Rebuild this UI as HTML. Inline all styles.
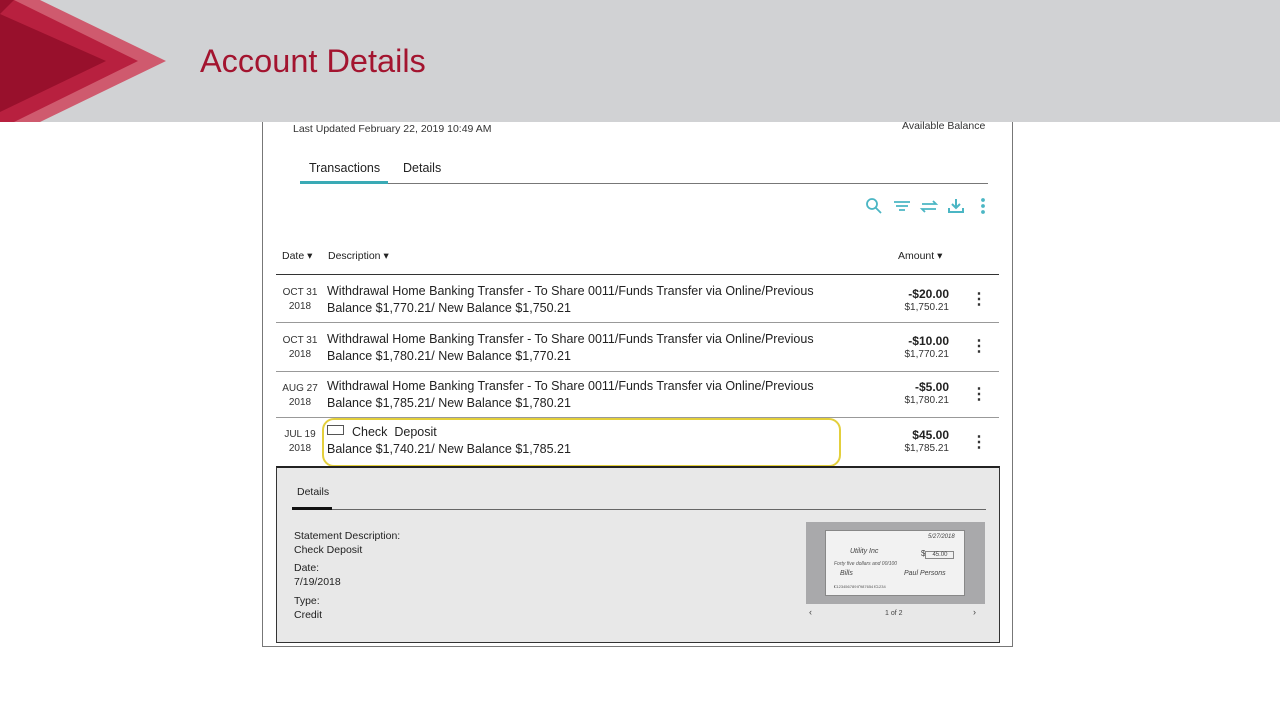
<!DOCTYPE html>
<html><head><style>
body{margin:0;width:1280px;height:720px;background:#fff;position:relative;overflow:hidden;font-family:"Liberation Sans",sans-serif;color:#222}
.a{position:absolute;white-space:nowrap}
.hdr{position:absolute;left:0;top:0;width:1280px;height:122px;background:#d1d2d4}
.row{position:absolute;left:276px;width:723px;border-top:1px solid #999}
.d{position:absolute;left:0;width:48px;text-align:center;font-size:10px;line-height:14px;color:#333}
.ds{position:absolute;left:51px;font-size:12.5px;line-height:17px;color:#222}
.am{position:absolute;right:50px;text-align:right;font-size:12px;font-weight:bold;line-height:14px}
.am small{display:block;font-weight:normal;font-size:10px;color:#333}
.k{position:absolute;right:12px;font-size:16px;font-weight:bold;color:#333}
</style></head><body>
<div class="hdr"></div>
<svg class="a" style="left:0;top:0" width="170" height="122">
<polygon points="0,0 40,0 166,61 40,122 0,122" fill="#cf5a6e"/>
<polygon points="0,0 14,0 138,61 14,122 0,122" fill="#b8203f"/>
<polygon points="0,14 106,61 0,112" fill="#98102c"/>
<polygon points="0,0 14,0 0,14" fill="#98102c"/>
</svg>
<div class="a" style="left:200px;top:43px;font-size:32.5px;color:#a3142f">Account Details</div>
<div class="a" style="left:262px;top:122px;width:749px;height:524px;border:1px solid #777;border-top:none"></div>
<div class="a" style="left:293px;top:123px;font-size:10.5px;color:#333">Last Updated February 22, 2019 10:49 AM</div>
<div class="a" style="left:902px;top:120px;font-size:10.5px;color:#333">Available Balance</div>
<div class="a" style="left:309px;top:161px;font-size:12.5px">Transactions</div>
<div class="a" style="left:403px;top:161px;font-size:12.5px">Details</div>
<div class="a" style="left:300px;top:183px;width:688px;border-top:1px solid #777"></div>
<div class="a" style="left:300px;top:181px;width:88px;height:3px;background:#3aaab5"></div>
<svg class="a" style="left:864px;top:196px" width="130" height="22" fill="none" stroke="#4bb6c4" stroke-width="1.8">
<circle cx="8" cy="8" r="5"/><path d="M12 12l5 5"/>
<path d="M30 6h16M32 10h12M35 14h6"/>
<path d="M58 8h14l-3-3M72 13h-14l3 3"/>
<path d="M92 3v9M88 8l4 4 4-4M85 12v4h14v-4" stroke-width="2"/>
<circle cx="119" cy="4" r="1" fill="#4bb6c4"/><circle cx="119" cy="10" r="1" fill="#4bb6c4"/><circle cx="119" cy="16" r="1" fill="#4bb6c4"/>
</svg>
<div class="a" style="left:282px;top:250px;font-size:10.5px">Date ▾</div>
<div class="a" style="left:328px;top:250px;font-size:10.5px">Description ▾</div>
<div class="a" style="left:898px;top:250px;font-size:10.5px">Amount ▾</div>
<div class="a" style="left:276px;top:274px;width:723px;border-top:1.5px solid #333"></div>

<div class="row" style="top:275px;height:47px;border-top:none">
<div class="d" style="top:11px">OCT 31<br>2018</div>
<div class="ds" style="top:8px">Withdrawal Home Banking Transfer - To Share 0011/Funds Transfer via Online/Previous<br>Balance $1,770.21/ New Balance $1,750.21</div>
<div class="am" style="top:12px">-$20.00<small>$1,750.21</small></div><div class="k" style="top:14px">⋮</div></div>
<div class="row" style="top:322px;height:48px">
<div class="d" style="top:11px">OCT 31<br>2018</div>
<div class="ds" style="top:8px">Withdrawal Home Banking Transfer - To Share 0011/Funds Transfer via Online/Previous<br>Balance $1,780.21/ New Balance $1,770.21</div>
<div class="am" style="top:11px">-$10.00<small>$1,770.21</small></div><div class="k" style="top:13px">⋮</div></div>
<div class="row" style="top:371px;height:46px">
<div class="d" style="top:10px">AUG 27<br>2018</div>
<div class="ds" style="top:6px">Withdrawal Home Banking Transfer - To Share 0011/Funds Transfer via Online/Previous<br>Balance $1,785.21/ New Balance $1,780.21</div>
<div class="am" style="top:8px">-$5.00<small>$1,780.21</small></div><div class="k" style="top:12px">⋮</div></div>
<div class="row" style="top:417px;height:49px">
<div class="d" style="top:10px">JUL 19<br>2018</div>
<div class="ds" style="top:6px"><span style="display:inline-block;width:15px;height:8px;border:1px solid #555;margin-right:8px;vertical-align:1px"></span>Check&nbsp; Deposit<br>Balance $1,740.21/ New Balance $1,785.21</div>
<div class="am" style="top:10px">$45.00<small>$1,785.21</small></div><div class="k" style="top:14px">⋮</div></div>
<div class="a" style="left:322px;top:418px;width:515px;height:45px;border:2px solid #e3cf3c;border-radius:12px"></div>

<div class="a" style="left:276px;top:466px;width:722px;height:174px;background:#e8e8e8;border:1px solid #333;border-top:2px solid #222"></div>
<div class="a" style="left:297px;top:486px;font-size:10.5px">Details</div>
<div class="a" style="left:292px;top:509px;width:694px;border-top:1px solid #666"></div>
<div class="a" style="left:292px;top:507px;width:40px;height:3px;background:#111"></div>
<div class="a" style="left:294px;top:529px;font-size:10.5px;line-height:14px">Statement Description:<br>Check Deposit</div>
<div class="a" style="left:294px;top:561px;font-size:10.5px;line-height:14px">Date:<br>7/19/2018</div>
<div class="a" style="left:294px;top:594px;font-size:10.5px;line-height:14px">Type:<br>Credit</div>
<div class="a" style="left:806px;top:522px;width:179px;height:82px;background:#a9a9ab"></div>
<div class="a" style="left:825px;top:530px;width:138px;height:64px;background:#f2f2f2;border:1px solid #888"></div>
<div class="a" style="left:928px;top:534px;font-size:6px;font-style:italic;color:#444">5/27/2018</div>
<div class="a" style="left:850px;top:548px;font-size:7px;font-style:italic;color:#444">Utility Inc</div>
<div class="a" style="left:921px;top:549px;font-size:8px;color:#444">$<span style="border:1px solid #888;padding:0 6px;font-size:6px">45.00</span></div>
<div class="a" style="left:834px;top:561px;font-size:5px;color:#555;font-style:italic">Forty five dollars and 00/100</div>
<div class="a" style="left:840px;top:570px;font-size:7px;font-style:italic;color:#444">Bills</div>
<div class="a" style="left:904px;top:570px;font-size:7px;font-style:italic;color:#444">Paul Persons</div>
<div class="a" style="left:834px;top:584px;font-size:4px;color:#555">⑆123456789 ⑈987654 ⑆1234</div>
<div class="a" style="left:809px;top:607px;font-size:9px;color:#444">‹</div>
<div class="a" style="left:885px;top:610px;font-size:7px;color:#444">1 of 2</div>
<div class="a" style="left:973px;top:607px;font-size:9px;color:#444">›</div>
</body></html>
